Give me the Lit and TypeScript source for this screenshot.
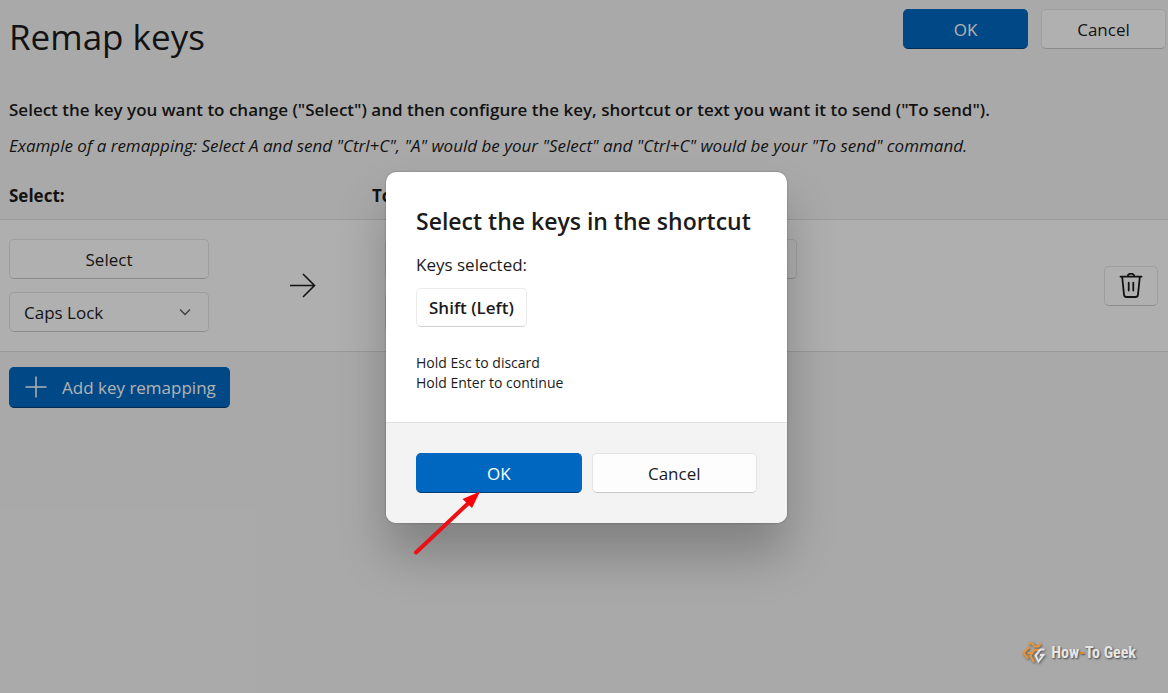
import { LitElement, html, css } from "lit";
import { customElement, state } from "lit/decorators.js";

@customElement("app-root")
export class AppRoot extends LitElement {
  @state() private dialogOpen = true;

  static styles = css`
    :host {
      display: block;
      position: relative;
      min-height: 100vh;
      overflow: hidden;
      background: #f3f3f3;
      color: #1b1b1b;
      font-family: "Segoe UI", "Open Sans", "Noto Sans", sans-serif;
      font-size: 17px;
      line-height: 24px;
    }
    * {
      box-sizing: border-box;
    }
    h1,
    h2,
    p {
      margin: 0;
    }
    .page {
      min-height: 100vh;
    }
    .header {
      display: flex;
      justify-content: space-between;
      align-items: flex-start;
      padding: 9px 2px 0 9px;
    }
    h1 {
      font-size: 35px;
      line-height: 56px;
      font-weight: 400;
    }
    .actions {
      display: flex;
      gap: 13px;
    }
    .actions .btn {
      width: 125px;
    }
    .btn,
    .select {
      height: 40px;
      margin: 0;
      border: 1px solid #e3e3e3;
      border-bottom-color: #c8c8c8;
      border-radius: 5px;
      background: #fdfdfd;
      color: inherit;
      font: inherit;
      padding: 2px 14px 0;
    }
    .primary {
      border-color: #0067c0;
      border-bottom-color: #003e73;
      background: #0067c0;
      color: #fff;
    }
    .intro {
      padding: 33px 9px 0;
      font-weight: 600;
    }
    .example {
      padding: 12px 9px 0;
      font-style: italic;
    }
    .columns {
      display: grid;
      grid-template-columns: 363px 1fr;
      padding: 26px 9px 11px;
      font-weight: 700;
    }
    .row {
      display: flex;
      align-items: center;
      padding: 19px 10px 19px 9px;
      border-top: 1px solid #dcdcdc;
      border-bottom: 1px solid #dcdcdc;
      background: #fbfbfb;
    }
    .stack {
      display: flex;
      flex-direction: column;
      gap: 13px;
      width: 200px;
    }
    .picker {
      position: relative;
      display: flex;
    }
    .select {
      appearance: none;
      width: 100%;
    }
    .chevron {
      position: absolute;
      right: 18px;
      top: 16px;
      pointer-events: none;
    }
    .arrow {
      margin: 0 69px 0 81px;
    }
    .top {
      align-self: flex-start;
      width: 200px;
      margin-left: 12px;
    }
    .delete {
      display: grid;
      place-items: center;
      width: 54px;
      padding: 0;
      margin-left: auto;
    }
    .footer {
      padding: 15px 9px;
    }
    .add {
      display: flex;
      align-items: center;
      gap: 15px;
      height: 41px;
      padding: 0 13px 0 15px;
    }
    svg {
      display: block;
    }
    .backdrop {
      position: absolute;
      inset: 0;
      display: grid;
      place-items: center;
      padding: 2px 0 0 5px;
      background: rgba(0, 0, 0, 0.3);
    }
    .dialog {
      position: relative;
      width: 401px;
      border-radius: 10px;
      background: #fff;
      box-shadow: 0 0 2px rgba(0, 0, 0, 0.35), 0 32px 50px rgba(0, 0, 0, 0.24);
    }
    .body {
      padding: 32px 30px 29px;
    }
    h2 {
      font-size: 23px;
      line-height: 34px;
      font-weight: 600;
      white-space: nowrap;
    }
    .label {
      padding: 15px 0 11px;
    }
    .key {
      display: inline-block;
      padding: 7px 12px 6px;
      border: 1px solid #ebebeb;
      border-bottom-color: #d0d0d0;
      border-radius: 5px;
      font-weight: 600;
    }
    .hint {
      padding-top: 26px;
      font-size: 14px;
      line-height: 20px;
    }
    .buttons {
      display: grid;
      grid-template-columns: 1fr 1fr;
      gap: 10px;
      padding: 30px;
      border-top: 1px solid #e0e0e0;
      border-radius: 0 0 10px 10px;
      background: #f3f3f3;
    }
    .pointer {
      position: absolute;
      left: 26px;
      bottom: -33px;
      pointer-events: none;
    }
    .watermark {
      position: absolute;
      right: 32px;
      bottom: 28px;
      display: flex;
      align-items: center;
      gap: 5px;
      color: #e6e6e6;
      font-family: "Roboto Condensed", "Liberation Sans Narrow", Roboto, sans-serif;
      font-size: 16px;
      line-height: 24px;
      font-weight: 700;
      text-shadow: 1px 1px 2px rgba(0, 0, 0, 0.6);
    }
    .logo {
      filter: drop-shadow(1px 1px 1px rgba(0, 0, 0, 0.5));
    }
    .dash {
      color: #e08a2c;
    }
  `;

  private close() {
    this.dialogOpen = false;
  }

  private picker(label: string, value: string) {
    return html`<div class="picker">
      <select class="select" aria-label=${label}>
        <option>${value}</option>
      </select>
      <svg class="chevron" width="12" height="8" viewBox="0 0 12 8" fill="none" stroke="#555" stroke-width="1.3">
        <path d="M1 1.5 6 6.5 11 1.5" />
      </svg>
    </div>`;
  }

  render() {
    return html`
      <main class="page">
        <header class="header">
          <h1>Remap keys</h1>
          <div class="actions">
            <button class="btn primary">OK</button>
            <button class="btn">Cancel</button>
          </div>
        </header>
        <p class="intro">
          Select the key you want to change ("Select") and then configure the key, shortcut or text you want it to send
          ("To send").
        </p>
        <p class="example">
          Example of a remapping: Select A and send "Ctrl+C", "A" would be your "Select" and "Ctrl+C" would be your "To
          send" command.
        </p>
        <div class="columns"><span>Select:</span><span>To send:</span></div>
        <section class="row">
          <div class="stack">
            <button class="btn">Select</button>
            ${this.picker("Key to remap", "Caps Lock")}
          </div>
          <svg class="arrow" width="26" height="26" viewBox="0 0 26 26" fill="none" stroke="#1b1b1b" stroke-width="1.6">
            <path d="M0 12.5H24.5M13 1 24.5 12.5 13 24" />
          </svg>
          <div class="stack">
            ${this.picker("Send type", "Send key")} ${this.picker("Key to send", "")}
          </div>
          <button class="btn top">Select</button>
          <button class="btn delete" aria-label="Delete remapping">
            <svg
              width="24"
              height="26"
              viewBox="0 0 24 26"
              fill="none"
              stroke="#1b1b1b"
              stroke-width="1.8"
              stroke-linecap="round"
              stroke-linejoin="round"
            >
              <path d="M1.5 3.7H22.5M8.7 3.5a3.3 2.8 0 0 1 6.6 0M3.2 4 5 21.6Q5.3 24 7.5 24H16.5Q18.7 24 19 21.6L20.8 4M9.7 9.7V17.6M14.3 9.7V17.6" />
            </svg>
          </button>
        </section>
        <div class="footer">
          <button class="btn primary add">
            <svg width="22" height="24" viewBox="0 0 22 24" fill="none" stroke="#fff" stroke-width="1.5">
              <path d="M11 0.5V21.5M0.5 11H21.5" />
            </svg>
            Add key remapping
          </button>
        </div>
      </main>
      ${this.dialogOpen
        ? html`<div class="backdrop">
            <div class="dialog" role="dialog" aria-modal="true" aria-labelledby="title">
              <div class="body">
                <h2 id="title">Select the keys in the shortcut</h2>
                <p class="label">Keys selected:</p>
                <span class="key">Shift (Left)</span>
                <p class="hint">Hold Esc to discard<br />Hold Enter to continue</p>
              </div>
              <div class="buttons">
                <button class="btn primary" @click=${this.close}>OK</button>
                <button class="btn" @click=${this.close}>Cancel</button>
              </div>
              <svg class="pointer" width="70" height="66" viewBox="0 0 70 66">
                <path d="M4 62.5 56 13.5" stroke="#ec1014" stroke-width="4" stroke-linecap="round" />
                <path d="M68 1.5 50.5 9 60 18Z" fill="#fb0007" />
              </svg>
            </div>
          </div>`
        : ""}
      <div class="watermark">
        <svg class="logo" width="24" height="22" viewBox="0 0 24 22" fill="none" stroke-width="2.2">
          <path d="M6.5 1.5H10.5L12.5 4.5H16.5L18.5 1.5M7 5 1.5 11 6 16.5M5.5 11H10.5M12 8H18M12.5 7.5 8.5 14 12 20" stroke="#e8953a" />
          <path d="M22.5 7.5H18.5L13.5 13.5 16.5 19.5 21.5 13H18" stroke="#e6e6e6" stroke-width="2" />
        </svg>
        <span>How<span class="dash">-</span>To Geek</span>
      </div>
    `;
  }
}
